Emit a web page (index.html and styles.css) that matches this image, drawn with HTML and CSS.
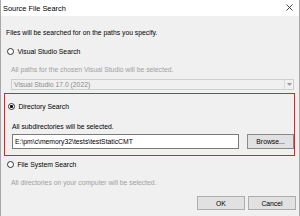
FILE: index.html
```html
<!DOCTYPE html>
<html>
<head>
<meta charset="utf-8">
<link rel="stylesheet" href="styles.css">
</head>
<body>
<div class="window">
  <div class="titlebar">
    <span class="title">Source File Search</span>
    <svg class="close" width="7" height="7" viewBox="0 0 7 7"><path d="M0.5 0.5 L6.5 6.5 M6.5 0.5 L0.5 6.5" stroke="#333" stroke-width="0.9" fill="none"/></svg>
  </div>
  <div class="content">
    <div class="intro">Files will be searched for on the paths you specify.</div>
    <div class="radio-row vs"><span class="radio"></span><span>Visual Studio Search</span></div>
    <div class="hint disabled">All paths for the chosen Visual Studio will be selected.</div>
    <div class="combo">
      <span class="combo-text">Visual Studio 17.0 (2022)</span>
      <span class="combo-btn"><svg width="5" height="3" viewBox="0 0 5 3"><path d="M0 0 H5 L2.5 3 Z" fill="#9a9a9a"/></svg></span>
    </div>
    <div class="group">
      <div class="radio-row"><span class="radio checked"></span><span>Directory Search</span></div>
      <div class="hint">All subdirectories will be selected.</div>
      <div class="path-row">
        <div class="input">E:\pm\c\memory32\tests\testStaticCMT</div>
        <div class="btn browse">Browse...</div>
      </div>
    </div>
    <div class="radio-row fs"><span class="radio"></span><span>File System Search</span></div>
    <div class="hint disabled">All directories on your computer will be selected.</div>
    <div class="actions">
      <div class="btn ok">OK</div>
      <div class="btn cancel">Cancel</div>
    </div>
  </div>
</div>
</body>
</html>
```
FILE: styles.css
```css
html, body {
  margin: 0;
  padding: 0;
  background: #f0f0f0;
}
.window {
  width: 300px;
  height: 216px;
  box-sizing: border-box;
  border-left: 1px solid #a8a8a8;
  border-right: 1px solid #a8a8a8;
  background: #f0f0f0;
  font-family: "Liberation Sans", Arial, sans-serif;
  font-size: 6.8px;
  color: #000;
  overflow: hidden;
}
.titlebar {
  height: 16px;
  background: #fff;
  display: flex;
  align-items: center;
  justify-content: space-between;
  padding: 0 6px 0 2px;
}
.title {
  font-size: 7.4px;
  color: #000;
}
.close {
  display: block;
  margin-top: -1px;
}
.content {
  padding: 12px 0 0 0;
  line-height: 9px;
}
.intro {
  padding-left: 5px;
  height: 9px;
}
.radio-row {
  display: flex;
  align-items: center;
  height: 9px;
  padding-left: 6px;
  gap: 3px;
}
.radio-row.vs {
  margin-top: 10px;
}
.radio {
  flex: none;
  width: 5.4px;
  height: 5.4px;
  border: 0.8px solid #333;
  border-radius: 50%;
  background: #fff;
  display: flex;
  align-items: center;
  justify-content: center;
}
.radio.checked::after {
  content: "";
  width: 2.6px;
  height: 2.6px;
  border-radius: 50%;
  background: #000;
}
.hint {
  padding-left: 10px;
  height: 9px;
  margin-top: 9px;
}
.hint.disabled {
  color: #a0a0a0;
}
.combo {
  margin: 5px 5px 0 10px;
  height: 11px;
  box-sizing: border-box;
  border: 1px solid #cfcfcf;
  background: #f0f0f0;
  display: flex;
  align-items: center;
  justify-content: space-between;
  padding-left: 2px;
}
.combo-text {
  color: #8a8a8a;
  line-height: 9px;
}
.combo-btn {
  width: 9px;
  height: 9px;
  box-sizing: border-box;
  border-left: 1px solid #dadada;
  display: flex;
  align-items: center;
  justify-content: center;
}
.combo-btn svg {
  display: block;
}
.group {
  margin: 3px 4px 0 3px;
  border: 1px solid #e52020;
  padding: 8px 0 6px 0;
}
.group .radio-row {
  padding-left: 3px;
}
.group .hint {
  padding-left: 7px;
  margin-top: 11px;
}
.path-row {
  display: flex;
  margin-top: 3px;
  padding-left: 7px;
  align-items: center;
}
.input {
  width: 227px;
  height: 15px;
  box-sizing: border-box;
  border: 1px solid #7a7a7a;
  background: #fff;
  line-height: 13px;
  padding-left: 2px;
}
.btn {
  height: 14px;
  box-sizing: border-box;
  border: 1px solid #adadad;
  background: #e1e1e1;
  display: flex;
  align-items: center;
  justify-content: center;
}
.browse {
  width: 47px;
  height: 15px;
  margin-left: 8px;
  border-color: #8a8a8a;
}
.radio-row.fs {
  margin-top: 4px;
}
.actions {
  display: flex;
  justify-content: flex-end;
  gap: 3px;
  margin-top: 9px;
  padding-right: 3px;
}
.ok, .cancel {
  width: 48px;
}
```
